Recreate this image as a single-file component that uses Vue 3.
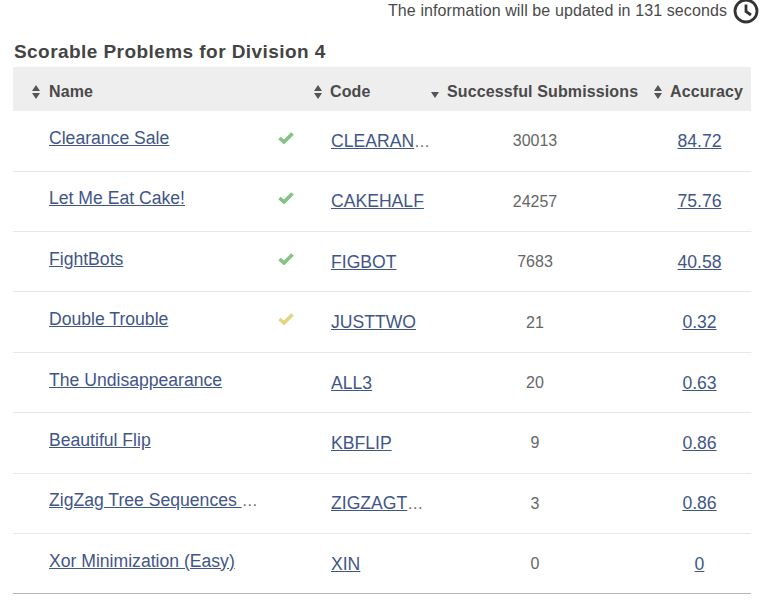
<script setup>
const rows = [
  { name: 'Clearance Sale', code: 'CLEARANCE', subs: '30013', acc: '84.72', state: 'ok' },
  { name: 'Let Me Eat Cake!', code: 'CAKEHALF', subs: '24257', acc: '75.76', state: 'ok' },
  { name: 'FightBots', code: 'FIGBOT', subs: '7683', acc: '40.58', state: 'ok' },
  { name: 'Double Trouble', code: 'JUSTTWO', subs: '21', acc: '0.32', state: 'partial' },
  { name: 'The Undisappearance', code: 'ALL3', subs: '20', acc: '0.63', state: '' },
  { name: 'Beautiful Flip', code: 'KBFLIP', subs: '9', acc: '0.86', state: '' },
  { name: 'ZigZag Tree Sequences Count', code: 'ZIGZAGTREE', subs: '3', acc: '0.86', state: '' },
  { name: 'Xor Minimization (Easy)', code: 'XIN', subs: '0', acc: '0', state: '' },
]
</script>

<template>
  <div class="page">
    <div class="timer">
      <span>The information will be updated in 131 seconds</span>
      <svg class="clock" viewBox="0 0 26 26" width="26" height="26">
        <circle cx="13" cy="13" r="11" fill="none" stroke="#333" stroke-width="2.8" />
        <path d="M13 6.5V13.5L18 17" fill="none" stroke="#333" stroke-width="2.8" />
      </svg>
    </div>
    <h3 class="title">Scorable Problems for Division 4</h3>
    <div class="table">
      <div class="row head">
        <div class="name-col">
          <span class="sort"><i class="up"></i><i class="down"></i></span>
          <span>Name</span>
        </div>
        <div class="code-col">
          <span class="sort"><i class="up"></i><i class="down"></i></span>
          <span>Code</span>
        </div>
        <div class="subs-col">
          <span class="sort active"><i class="down"></i></span>
          <span>Successful Submissions</span>
        </div>
        <div class="acc-col">
          <span class="sort"><i class="up"></i><i class="down"></i></span>
          <span>Accuracy</span>
        </div>
      </div>
      <div v-for="r in rows" :key="r.code" class="row body">
        <div class="name-col">
          <div class="clip name-clip"><a class="link">{{ r.name }}</a></div>
          <svg v-if="r.state" class="check" :class="r.state" viewBox="0 0 16 13" width="16" height="13">
            <path d="M1.5 7L6 11L14.5 2.5" fill="none" stroke-width="3.6" />
          </svg>
        </div>
        <div class="code-col"><div class="clip code-clip"><a class="link">{{ r.code }}</a></div></div>
        <div class="subs-col">{{ r.subs }}</div>
        <div class="acc-col"><a class="link">{{ r.acc }}</a></div>
      </div>
    </div>
  </div>
</template>

<style>
html, body { margin: 0; background: #fff; }
</style>

<style scoped>
.page {
  width: 761px;
  height: 613px;
  overflow: hidden;
  font-family: "Liberation Sans", Arial, sans-serif;
  color: #4a4a4a;
  box-sizing: border-box;
}
.timer {
  height: 22px;
  display: flex;
  justify-content: flex-end;
  align-items: center;
  gap: 6px;
  padding-right: 2px;
  font-size: 16px;
  letter-spacing: 0.1px;
}
.clock { flex: none; }
.title {
  margin: 16px 0 0 14px;
  height: 28px;
  line-height: 28px;
  font-size: 19px;
  letter-spacing: 0.44px;
  font-weight: 700;
  color: #444;
}
.table { margin: 1px 0 0 13px; width: 738px; }
.row {
  display: grid;
  grid-template-columns: 300px 117px 210px 111px;
  align-items: center;
  box-sizing: border-box;
}
.head {
  height: 44.3px;
  padding-top: 5px;
  background: #eeeeee;
  font-weight: 700;
  font-size: 16px;
  color: #4a4a4a;
  letter-spacing: 0.12px;
}
.body {
  height: 60.4px;
  padding-top: 1px;
  border-bottom: 1px solid #e8e8e8;
  font-size: 16px;
  color: #666;
  text-align: center;
}
.body:last-child { border-bottom-color: #b5b5b5; }
.head > div { display: flex; align-items: center; }
.head .name-col { padding-left: 18px; gap: 9px; }
.head .code-col { gap: 8px; }
.head .subs-col { gap: 8px; white-space: nowrap; }
.head .acc-col { gap: 8px; padding-left: 13px; white-space: nowrap; }
.sort {
  display: inline-flex;
  flex-direction: column;
  gap: 2px;
  width: 9px;
  align-items: center;
  flex: none;
}
.sort i { display: block; width: 0; height: 0; border-left: 4px solid transparent; border-right: 4px solid transparent; }
.sort .up { border-bottom: 6px solid #555; }
.sort .down { border-top: 6px solid #555; }
.sort.active { padding-top: 7px; }
.body .name-col {
  display: flex;
  align-items: center;
  text-align: left;
  padding-left: 36px;
  position: relative;
  transform: translateY(-3px);
}
.link {
  color: #3f5688;
  text-decoration: underline;
  font-size: 17.6px;
  cursor: pointer;
}
.clip {
  overflow: hidden;
  white-space: nowrap;
  text-overflow: ellipsis;
}
.name-clip { width: 209px; }
.code-clip { width: 102px; }
.check { position: absolute; left: 265px; top: 3px; }
.check.ok { stroke: #85c285; }
.check.partial { stroke: #e3d57f; }
.body .code-col { text-align: left; padding-left: 18px; }
.body .acc-col { padding-left: 8px; }
</style>
